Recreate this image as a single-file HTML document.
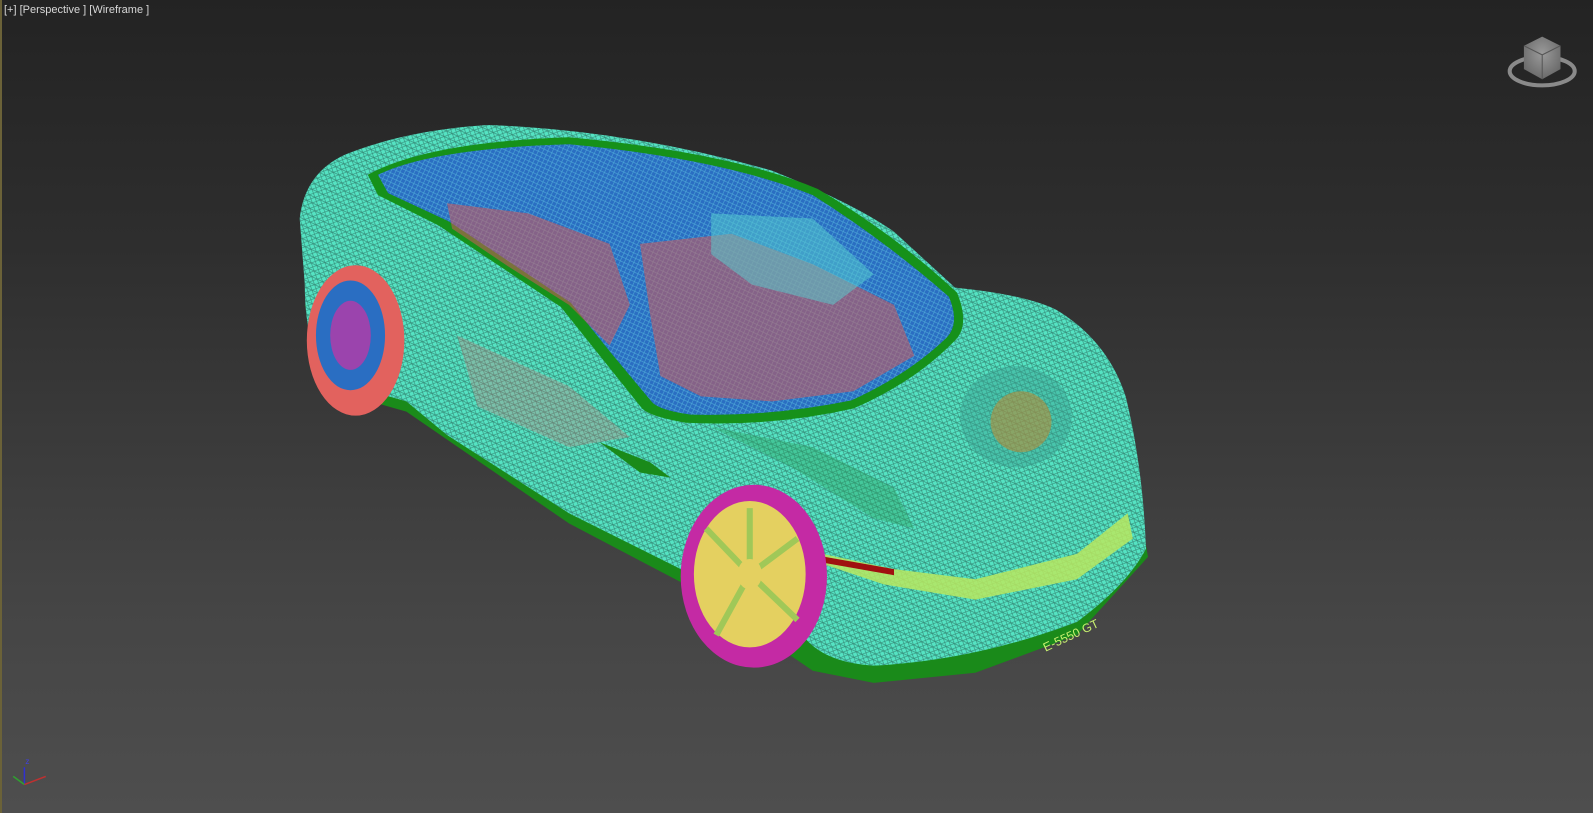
<!DOCTYPE html>
<html><head><meta charset="utf-8"><style>
html,body{margin:0;padding:0;width:1593px;height:813px;overflow:hidden;background:linear-gradient(#232323 0%,#2e2e2e 30%,#454545 75%,#4e4e4e 100%);}
.lbl{position:absolute;left:4px;top:4px;font:11px "Liberation Sans",sans-serif;color:#d8d8d8;white-space:pre;}
.edge{position:absolute;left:0;top:0;width:2px;height:813px;background:#6b6238;}
svg{position:absolute;left:0;top:0;}
</style></head><body>
<div class="edge"></div>
<svg width="1593" height="813" viewBox="0 0 1568 800" preserveAspectRatio="none">
<defs>
<pattern id="w" width="6" height="6" patternUnits="userSpaceOnUse" patternTransform="rotate(25)">
<path d="M0 0L6 6M6 0L0 6M0 3H6" stroke="#2a6a5c" stroke-width="0.6" fill="none" opacity="0.7"/>
</pattern>
<pattern id="wb" width="6" height="6" patternUnits="userSpaceOnUse" patternTransform="rotate(-20)">
<path d="M0 0L6 6M6 0L0 6" stroke="#5bc0e0" stroke-width="0.6" fill="none" opacity="0.7"/>
</pattern>
<radialGradient id="cg" cx="0.5" cy="0.4" r="0.6"><stop offset="0" stop-color="#9a9a9a"/><stop offset="1" stop-color="#6a6a6a"/></radialGradient>
</defs>
<path d="M300 300 L330 385 L400 405 L560 515 L680 578 L800 660 L860 672 L960 662 L1060 625 L1130 548 L1125 520 L1000 560 L850 600 L780 560 L680 530 L560 470 L430 390 Z" fill="#1a8a1a"/>
<path d="M295 215 Q300 170 340 152 Q400 128 480 123 Q620 128 760 168 Q840 200 880 228 L940 283 Q1010 290 1040 305 Q1090 335 1108 390 Q1125 460 1128 540 Q1110 575 1060 612 Q960 650 860 655 Q810 652 790 625 L700 575 L660 555 L560 505 L440 428 L400 395 L330 375 Q300 350 300 280 Z" fill="#55e3c3"/>
<path d="M295 215 Q300 170 340 152 Q400 128 480 123 Q620 128 760 168 Q840 200 880 228 L940 283 Q1010 290 1040 305 Q1090 335 1108 390 Q1125 460 1128 540 Q1110 575 1060 612 Q960 650 860 655 Q810 652 790 625 L700 575 L660 555 L560 505 L440 428 L400 395 L330 375 Q300 350 300 280 Z" fill="url(#w)"/>
<path d="M362 172 Q420 140 560 135 Q720 150 805 186 Q880 230 942 288 Q955 320 940 335 Q900 376 840 402 Q760 420 675 416 Q640 410 632 402 L592 352 L552 302 L492 262 L432 222 L372 192 Z" fill="#16911a"/>
<path d="M372 172 Q425 146 560 142 Q710 156 800 192 Q870 236 934 292 Q945 318 932 332 Q895 368 838 394 Q760 410 680 408 Q650 404 642 396 L602 348 L562 298 L502 258 L442 218 L382 190 Z" fill="#2a6ec2"/>
<path d="M372 172 Q425 146 560 142 Q710 156 800 192 Q870 236 934 292 Q945 318 932 332 Q895 368 838 394 Q760 410 680 408 Q650 404 642 396 L602 348 L562 298 L502 258 L442 218 L382 190 Z" fill="url(#wb)"/>
<path d="M440 200 L520 210 L600 240 L620 300 L600 340 L560 300 L500 262 L445 225 Z" fill="#d05a5a" opacity="0.55"/>
<path d="M630 240 L720 230 L800 260 L880 300 L900 350 L840 385 L760 395 L690 390 L650 370 L640 310 Z" fill="#d05a5a" opacity="0.55"/>
<path d="M700 210 L800 215 L860 270 L820 300 L740 280 L700 250 Z" fill="#55d0d0" opacity="0.5"/>
<path d="M450 330 L560 380 L620 430 L560 440 L470 400 Z" fill="#d07070" opacity="0.3"/>
<ellipse cx="1000" cy="410" rx="55" ry="50" fill="#3aa090" opacity="0.45"/>
<ellipse cx="1005" cy="415" rx="30" ry="30" fill="#c08a30" opacity="0.55"/>
<path d="M810 545 L880 560 L960 570 L1060 545 L1110 505 L1115 530 L1060 570 L960 590 L870 575 L810 555 Z" fill="#b8e860" opacity="0.85"/>
<path d="M812 548 L880 560 L880 566 L812 554 Z" fill="#a01010"/>
<path d="M590 435 L640 455 L660 470 L630 465 Z" fill="#1a8a1a"/>
<path d="M700 420 L800 440 L880 480 L900 520 L860 510 L780 460 Z" fill="#2aa060" opacity="0.4"/>
<text x="1020" y="630" font-family="Liberation Sans,sans-serif" font-size="12" fill="#c8f070" transform="rotate(-25 1050 615)">E-5550 GT</text>
<ellipse cx="350" cy="335" rx="48" ry="74" fill="#e2625e"/>
<ellipse cx="345" cy="330" rx="34" ry="54" fill="#2a6ec2"/>
<ellipse cx="345" cy="330" rx="20" ry="34" fill="#b83aa8" opacity="0.8"/>
<ellipse cx="742" cy="567" rx="72" ry="90" fill="#c42aa4"/>
<ellipse cx="738" cy="565" rx="55" ry="72" fill="#e4d060"/>
<g stroke="#a0c858" stroke-width="6"><line x1="738" y1="565" x2="738" y2="500"/><line x1="738" y1="565" x2="785" y2="530"/><line x1="738" y1="565" x2="785" y2="610"/><line x1="738" y1="565" x2="705" y2="625"/><line x1="738" y1="565" x2="695" y2="520"/></g>
<ellipse cx="738" cy="565" rx="12" ry="15" fill="#e4d060"/>
<ellipse cx="1518" cy="70" rx="32" ry="14" fill="none" stroke="#8a8a8a" stroke-width="4"/>
<path d="M1500 45 L1518 36 L1536 45 L1536 68 L1518 78 L1500 68 Z" fill="url(#cg)"/>
<path d="M1500 45 L1518 54 L1536 45 M1518 54 L1518 78" stroke="#555" stroke-width="1" fill="none"/>
<line x1="24" y1="772" x2="24" y2="755" stroke="#3030d0" stroke-width="1.5"/>
<line x1="24" y1="772" x2="13" y2="764" stroke="#30a030" stroke-width="1.5"/>
<line x1="24" y1="772" x2="45" y2="764" stroke="#c03030" stroke-width="1.5"/>
<text x="25" y="752" font-family="Liberation Sans,sans-serif" font-size="8" fill="#4040e0">z</text>
</svg>
<div class="lbl">[+] [Perspective ] [Wireframe ]</div>
</body></html>
